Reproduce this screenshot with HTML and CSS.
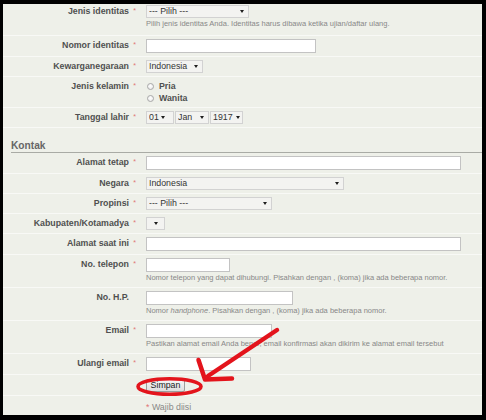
FILE: index.html
```html
<!DOCTYPE html>
<html lang="id">
<head>
<meta charset="utf-8">
<title>Formulir Pendaftaran</title>
<link rel="stylesheet" href="styles.css">
</head>
<body>
<div class="frame">
  <form class="form">
    <div class="row row-first">
      <label class="lbl">Jenis identitas<span class="req">*</span></label>
      <div class="field">
        <span class="sel w-identitas"><select><option>--- Pilih ---</option></select></span>
        <div class="hint">Pilih jenis identitas Anda. Identitas harus dibawa ketika ujian/daftar ulang.</div>
      </div>
    </div>
    <div class="row">
      <label class="lbl">Nomor identitas<span class="req">*</span></label>
      <div class="field"><input class="txt w-170" type="text"></div>
    </div>
    <div class="row">
      <label class="lbl">Kewarganegaraan<span class="req">*</span></label>
      <div class="field"><span class="sel w-warga"><select><option>Indonesia</option></select></span></div>
    </div>
    <div class="row">
      <label class="lbl lbl-radio">Jenis kelamin<span class="req">*</span></label>
      <div class="field">
        <label class="opt"><input class="radio" type="radio" name="jk"><span>Pria</span></label>
        <label class="opt"><input class="radio" type="radio" name="jk"><span>Wanita</span></label>
      </div>
    </div>
    <div class="row">
      <label class="lbl">Tanggal lahir<span class="req">*</span></label>
      <div class="field">
        <div class="dates">
          <span class="sel w-tgl"><select><option>01</option></select></span>
          <span class="sel w-bln"><select><option>Jan</option></select></span>
          <span class="sel w-thn"><select><option>1917</option></select></span>
        </div>
      </div>
    </div>

    <h3 class="section">Kontak</h3>

    <div class="row">
      <label class="lbl">Alamat tetap<span class="req">*</span></label>
      <div class="field"><input class="txt w-315" type="text"></div>
    </div>
    <div class="row">
      <label class="lbl">Negara<span class="req">*</span></label>
      <div class="field"><span class="sel w-negara"><select><option>Indonesia</option></select></span></div>
    </div>
    <div class="row">
      <label class="lbl">Propinsi<span class="req">*</span></label>
      <div class="field"><span class="sel w-propinsi"><select><option>--- Pilih ---</option></select></span></div>
    </div>
    <div class="row">
      <label class="lbl">Kabupaten/Kotamadya<span class="req">*</span></label>
      <div class="field"><span class="sel sel-empty w-kab"><select><option></option></select></span></div>
    </div>
    <div class="row">
      <label class="lbl">Alamat saat ini<span class="req">*</span></label>
      <div class="field"><input class="txt w-315" type="text"></div>
    </div>
    <div class="row">
      <label class="lbl">No. telepon<span class="req">*</span></label>
      <div class="field">
        <input class="txt w-84" type="text">
        <div class="hint">Nomor telepon yang dapat dihubungi. Pisahkan dengan , (koma) jika ada beberapa nomor.</div>
      </div>
    </div>
    <div class="row">
      <label class="lbl">No. H.P.<span class="req req-none"></span></label>
      <div class="field">
        <input class="txt w-147" type="text">
        <div class="hint">Nomor <em>handphone</em>. Pisahkan dengan , (koma) jika ada beberapa nomor.</div>
      </div>
    </div>
    <div class="row">
      <label class="lbl">Email<span class="req">*</span></label>
      <div class="field">
        <input class="txt w-126" type="text">
        <div class="hint">Pastikan alamat email Anda benar, email konfirmasi akan dikirim ke alamat email tersebut</div>
      </div>
    </div>
    <div class="row">
      <label class="lbl">Ulangi email<span class="req">*</span></label>
      <div class="field"><input class="txt w-105" type="text"></div>
    </div>
    <div class="row">
      <span class="lbl"></span>
      <div class="field"><button class="btn" type="button">Simpan</button></div>
    </div>
    <div class="row row-note">
      <span class="lbl"></span>
      <div class="field"><div class="note"><span class="req-note">*</span> Wajib diisi</div></div>
    </div>
  </form>
</div>

<svg class="annot" width="486" height="420" viewBox="0 0 486 420" aria-hidden="true">
  <ellipse cx="169.5" cy="386.5" rx="31.5" ry="7.8" fill="none" stroke="#e3141c" stroke-width="3.6"/>
  <line x1="277" y1="330" x2="208" y2="376" stroke="#e3141c" stroke-width="4.5" stroke-linecap="round"/>
  <polyline points="198.5,360 205,379.5 232,378.5" fill="none" stroke="#e3141c" stroke-width="4.5" stroke-linecap="round" stroke-linejoin="round"/>
</svg>
</body>
</html>
```

FILE: styles.css
```css
* { box-sizing: border-box; }

html, body {
  margin: 0;
  background: #000;
}

body {
  position: relative;
  width: 486px;
  height: 420px;
  overflow: hidden;
  font-family: "Liberation Sans", Arial, sans-serif;
}

.frame {
  margin: 4px 0 0 3px;
  width: 479px;
  height: 411px;
  background: #eef0e9;
  overflow: hidden;
}

.form {
  margin: -2px 0 0 0;
}

.row {
  display: grid;
  grid-template-columns: 133px 1fr;
  column-gap: 10px;
  align-items: start;
  padding: 3px 0;
  border-bottom: 1px solid #f8f9f6;
}

.row-first {
  padding-bottom: 5px;
}

.lbl {
  text-align: right;
  font-weight: bold;
  font-size: 8.8px;
  line-height: 13px;
  height: 13px;
  color: #505050;
  white-space: nowrap;
}

.lbl-radio {
  line-height: 12px;
  height: 12px;
}

.req {
  display: inline-block;
  width: 6px;
  margin-left: 1px;
  text-align: right;
  color: #e07575;
  font-weight: normal;
  font-size: 7px;
  line-height: 7px;
  vertical-align: 1px;
}

.field {
  display: flex;
  flex-direction: column;
  align-items: flex-start;
  min-width: 0;
}

.hint {
  font-size: 7.5px;
  line-height: 12px;
  color: #888;
  white-space: nowrap;
}

.hint em {
  font-style: italic;
}

.txt {
  display: block;
  height: 14px;
  margin: 0;
  padding: 0 2px;
  border: 1px solid #c3c3c3;
  border-radius: 0;
  background: #fff;
  font-family: inherit;
  font-size: 8.8px;
}

.w-84 { width: 84px; }
.w-105 { width: 105px; }
.w-126 { width: 126px; }
.w-147 { width: 147px; }
.w-170 { width: 170px; }
.w-315 { width: 315px; }

.sel {
  position: relative;
  display: block;
  height: 13px;
}

.sel select {
  -webkit-appearance: none;
  appearance: none;
  display: block;
  width: 100%;
  height: 13px;
  margin: 0;
  padding: 0 0 0 2px;
  border: 1px solid #d2d2d2;
  border-radius: 0;
  background: #f3f3f1;
  font-family: inherit;
  font-size: 8.8px;
  line-height: 11px;
  color: #333;
}

.sel::after {
  content: "";
  position: absolute;
  right: 5px;
  top: 5px;
  border-left: 2.5px solid transparent;
  border-right: 2.5px solid transparent;
  border-top: 3.5px solid #1e1e1e;
}

.sel-empty::after { right: 7px; }

.w-identitas { width: 103px; }
.w-warga { width: 57px; }
.w-tgl { width: 28px; }
.w-tgl::after { right: 9px; }
.w-bln { width: 34px; }
.w-thn { width: 33px; }
.w-thn::after { right: 3px; }
.w-negara { width: 198px; }
.w-propinsi { width: 126px; }
.w-kab { width: 19px; }

.dates {
  display: flex;
  gap: 1px;
}

.opt {
  display: flex;
  align-items: center;
  gap: 5px;
  height: 12px;
  font-size: 8.8px;
  font-weight: bold;
  color: #505050;
}

.radio {
  -webkit-appearance: none;
  appearance: none;
  width: 7px;
  height: 7px;
  margin: 0 0 0 1px;
  border: 1px solid #a8a8a8;
  border-radius: 50%;
  background: radial-gradient(circle at 50% 40%, #ffffff 0, #e6e6e6 100%);
}

.section {
  margin: 0 0 0 8px;
  padding: 11px 0 0;
  font-size: 10.2px;
  line-height: 13px;
  font-weight: bold;
  color: #666;
  border-bottom: 1px solid #a9aba5;
}

.btn {
  width: 39px;
  height: 13px;
  margin: 1px 0 0;
  padding: 0;
  border: 1px solid #9c9c9c;
  border-radius: 2px;
  background: linear-gradient(#f6f6f6, #dedede);
  font-family: inherit;
  font-size: 8.8px;
  line-height: 11px;
  color: #222;
}

.row-note {
  padding-top: 5px;
  border-bottom: 0;
}

.note {
  font-size: 8.8px;
  line-height: 12px;
  color: #888;
}

.req-note {
  color: #e07575;
}

.annot {
  position: absolute;
  left: 0;
  top: 0;
  pointer-events: none;
}
```
